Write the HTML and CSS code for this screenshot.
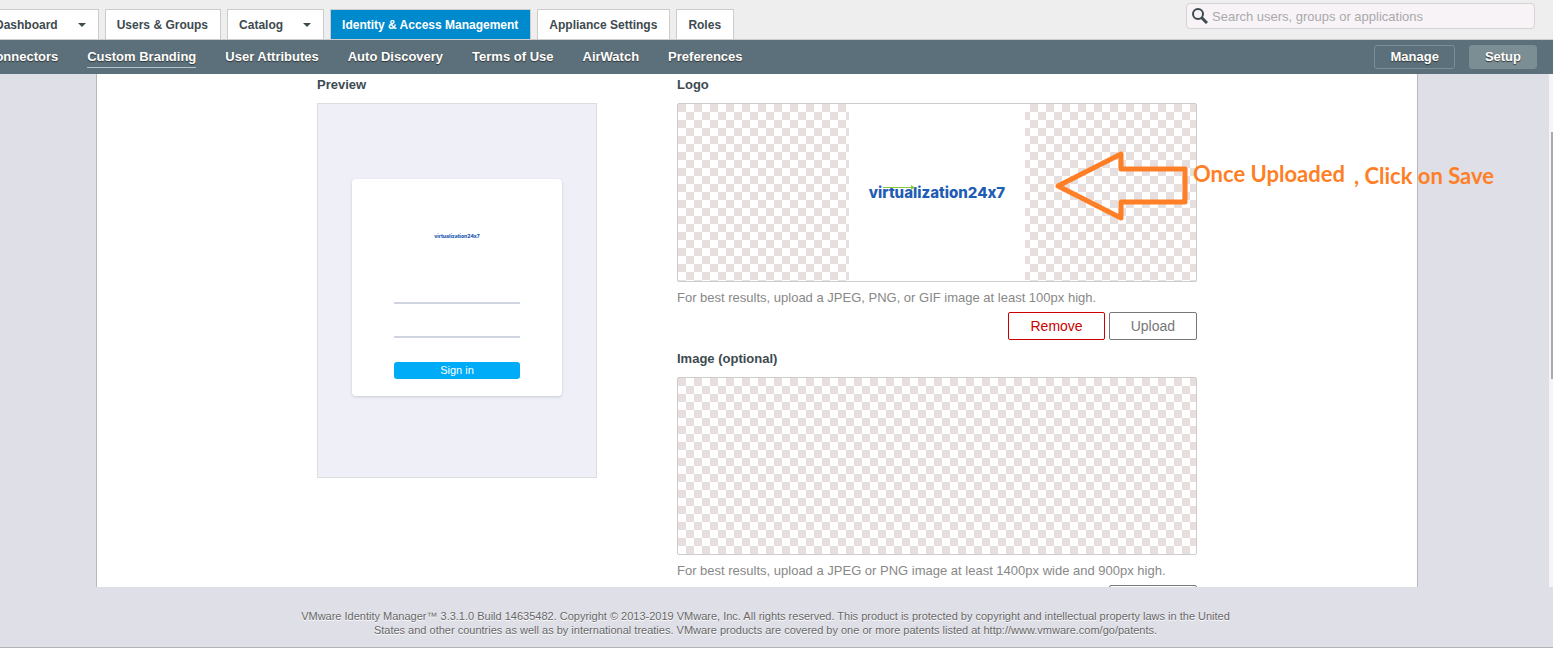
FILE: index.html
```html
<!DOCTYPE html>
<html lang="en">
<head>
    <meta charset="UTF-8">
    <meta name="viewport" content="width=device-width, initial-scale=1.0">
    <title>VMware Identity Manager - Custom Branding</title>
    <link rel="stylesheet" href="styles.css">
</head>
<body>
    <div class="app">
        <header class="topbar">
            <nav class="tabs" aria-label="Main">
                <a class="tab" href="#dashboard">Dashboard <span class="caret"></span></a>
                <a class="tab" href="#users">Users &amp; Groups</a>
                <a class="tab" href="#catalog">Catalog <span class="caret"></span></a>
                <a class="tab active" href="#iam">Identity &amp; Access Management</a>
                <a class="tab" href="#appliance">Appliance Settings</a>
                <a class="tab" href="#roles">Roles</a>
            </nav>
            <form class="search" role="search">
                <label for="search" aria-label="Search">
                    <svg width="16" height="16" viewBox="0 0 16 16" fill="none" stroke="#3e4a50">
                        <circle cx="6" cy="6" r="5" stroke-width="2"/>
                        <path d="M9.5 9.5 L15 15" stroke-width="3"/>
                    </svg>
                </label>
                <input type="text" id="search" placeholder="Search users, groups or applications">
            </form>
        </header>

        <nav class="subnav" aria-label="Identity and Access Management">
            <div class="subnav-links">
                <a href="#connectors">Connectors</a>
                <a class="current" href="#branding">Custom Branding</a>
                <a href="#attributes">User Attributes</a>
                <a href="#discovery">Auto Discovery</a>
                <a href="#terms">Terms of Use</a>
                <a href="#airwatch">AirWatch</a>
                <a href="#preferences">Preferences</a>
            </div>
            <div class="subnav-modes">
                <button type="button" class="mode">Manage</button>
                <button type="button" class="mode selected">Setup</button>
            </div>
        </nav>

        <div class="content">
            <main class="panel">
                <section class="preview-column">
                    <h2>Preview</h2>
                    <div class="preview">
                        <div class="login-card">
                            <div class="brand brand-small">virtualization24x7</div>
                            <div class="field"></div>
                            <div class="field"></div>
                            <div class="sign-in">Sign in</div>
                        </div>
                    </div>
                </section>

                <section class="upload-column">
                    <h2>Logo</h2>
                    <div class="dropzone">
                        <div class="logo-image">
                            <div class="brand">virtualization24x7
                                <svg class="brand-arrow" width="32" height="5" viewBox="0 0 32 5">
                                    <path d="M0 2h29v1H0z M28 0l4 2.5l-4 2.5z" fill="#8cc63f"/>
                                </svg>
                            </div>
                        </div>
                        <div class="callout">
                            <svg width="134" height="72" viewBox="0 0 134 72" fill="none" stroke="#ff7f27" stroke-width="5" stroke-linejoin="round">
                                <path d="M4 36 L67 4 V19 H131 V52 H67 V68 Z"/>
                            </svg>
                            <span>Once Uploaded</span>
                            <span class="callout-end">, Click on Save</span>
                        </div>
                    </div>
                    <p class="hint">For best results, upload a JPEG, PNG, or GIF image at least 100px high.</p>
                    <div class="buttons">
                        <button type="button" class="btn remove">Remove</button>
                        <button type="button" class="btn">Upload</button>
                    </div>

                    <h2>Image (optional)</h2>
                    <div class="dropzone empty"></div>
                    <p class="hint">For best results, upload a JPEG or PNG image at least 1400px wide and 900px high.</p>
                    <div class="buttons">
                        <button type="button" class="btn">Upload</button>
                    </div>
                </section>
            </main>
            <div class="scrollbar"><div class="thumb"></div></div>
        </div>

        <footer class="footer">
            <p>VMware Identity Manager™ 3.3.1.0 Build 14635482. Copyright © 2013-2019 VMware, Inc. All rights reserved. This product is protected by copyright and intellectual property laws in the United States and other countries as well as by international treaties. VMware products are covered by one or more patents listed at http://www.vmware.com/go/patents.</p>
        </footer>
    </div>
</body>
</html>
```

FILE: styles.css
```css
* {
    box-sizing: border-box;
}
body {
    margin: 0;
    padding: 0 4px 6px 0;
    height: 100vh;
    overflow: hidden;
    background: #fff;
    color: #3e4a50;
    font-family: "Liberation Sans", Arial, sans-serif;
    font-size: 13px;
}
a {
    color: inherit;
    text-decoration: none;
}
button {
    font-family: inherit;
    cursor: pointer;
}
.app {
    display: flex;
    flex-direction: column;
    height: 100%;
    overflow: hidden;
    background: #dfdfe8;
    border-bottom: 1px solid #b4b4b4;
}

/* Top bar */
.topbar {
    display: flex;
    justify-content: space-between;
    height: 40px;
    background: #eee;
    border-bottom: 1px solid #ccc;
}
.tabs {
    display: flex;
    gap: 6px;
    align-items: flex-end;
    margin-left: -17px;
}
.tab {
    display: flex;
    align-items: center;
    height: 30px;
    padding: 0 12px 0 11px;
    background: #fff;
    border: 1px solid #ccc;
    border-bottom: 0;
    font-size: 12px;
    font-weight: bold;
    white-space: nowrap;
}
.tab.active {
    background: #008ace;
    color: #fff;
}
.caret {
    margin-left: 20px;
    border: 4px solid transparent;
    border-top-color: #3e4a50;
    border-bottom: 0;
}
.search {
    display: flex;
    align-items: center;
    gap: 4px;
    width: 349px;
    height: 26px;
    margin: 3px 18px 0 0;
    padding: 0 5px;
    background: #f7f3f7;
    border: 1px solid #d4d4d4;
    border-radius: 4px;
}
.search label {
    display: flex;
}
.search input {
    flex: 1;
    padding: 0;
    border: 0;
    outline: 0;
    background: none;
    font: inherit;
}
.search input::placeholder {
    color: #aaa;
}

/* Sub navigation */
.subnav {
    display: flex;
    justify-content: space-between;
    align-items: center;
    height: 34px;
    padding-right: 16px;
    background: #5b707a;
    color: #fff;
    font-weight: bold;
    text-shadow: 0 1px 1px #333;
}
.subnav-links {
    display: flex;
    gap: 29px;
    margin-left: -14px;
    white-space: nowrap;
}
.subnav-links a {
    padding: 3px 0;
    border-bottom: 1px solid transparent;
}
.subnav-links a.current {
    border-bottom-color: #b5c2c9;
}
.subnav-modes {
    display: flex;
    gap: 14px;
}
.mode {
    height: 24px;
    padding: 0 15px 2px;
    background: none;
    border: 1px solid #7b8e94;
    border-radius: 3px;
    color: #fff;
    font-size: 13px;
    font-weight: bold;
    text-shadow: inherit;
}
.mode.selected {
    background: #7b8e94;
}

/* Content */
.content {
    display: flex;
    flex: 1;
    min-height: 0;
    overflow: hidden;
}
.panel {
    display: flex;
    gap: 80px;
    flex: 1;
    margin: 0 131px 0 96px;
    padding: 0 220px;
    background: #fff;
    border: 1px solid #b8b8b8;
    border-width: 0 1px;
}
.preview-column {
    width: 280px;
}
.upload-column {
    flex: 1;
}
h2 {
    margin: 0;
    padding: 3px 0 11px;
    font-size: 13px;
    line-height: 15px;
}
.preview {
    display: flex;
    justify-content: center;
    align-items: center;
    height: 375px;
    padding-bottom: 6px;
    background: #efeff7;
    border: 1px solid #ddd;
}
.login-card {
    width: 210px;
    height: 217px;
    padding: 42px;
    background: #fff;
    border-radius: 4px;
    box-shadow: 0 1px 3px #c8ccd4;
}
.brand {
    position: relative;
    color: #1f5cb3;
    font-family: Inter, sans-serif;
    font-size: 15px;
    font-weight: 800;
    font-variant-ligatures: none;
    line-height: 20px;
}
.brand-small {
    height: 49px;
    padding-top: 10px;
    font-size: 5px;
    line-height: 10px;
    text-align: center;
}
.brand-arrow {
    position: absolute;
    top: 2px;
    left: 14px;
}
.field {
    height: 34px;
    border-bottom: 2px solid #ced4e0;
}
.sign-in {
    height: 17px;
    margin-top: 24px;
    background: #00acf7;
    border-radius: 3px;
    color: #fff;
    font-size: 11px;
    line-height: 16px;
    text-align: center;
}
.dropzone {
    position: relative;
    display: flex;
    justify-content: center;
    height: 179px;
    border: 1px solid #ccc;
    border-radius: 2px;
    background: repeating-conic-gradient(#fff 0 25%, #e7dfde 0 50%) 0 0 / 16px 16px;
}
.dropzone.empty {
    height: 178px;
}
.logo-image {
    display: flex;
    justify-content: center;
    align-items: center;
    width: 176px;
    background: #fff;
}
.callout {
    position: absolute;
    top: 46px;
    left: 376px;
    display: flex;
    align-items: flex-start;
    color: #ff7f27;
    font-family: Lato, sans-serif;
    font-size: 22px;
    font-weight: bold;
    line-height: 48px;
    white-space: nowrap;
}
.callout span {
    margin-left: 5px;
}
.callout .callout-end {
    margin-left: 9px;
    line-height: 52px;
}
.hint {
    margin: 8px 0 6px;
    color: #888;
    line-height: 16px;
}
.buttons {
    display: flex;
    justify-content: flex-end;
    gap: 4px;
    margin-bottom: 8px;
}
.btn {
    height: 28px;
    padding: 0 21px;
    background: #fff;
    border: 1px solid #777;
    border-radius: 2px;
    color: #777;
    font-size: 14px;
}
.btn.remove {
    border-color: #c00;
    color: #c00;
}
.scrollbar {
    width: 4px;
    padding: 58px 0 0 2px;
    background: #f7f3f7;
}
.thumb {
    height: 247px;
    background: #aaa;
}

/* Footer */
.footer {
    height: 60px;
    padding: 22px 22px 0 0;
    color: #666;
    font-size: 11px;
    line-height: 14px;
    text-align: center;
    text-shadow: 0 1px 0 #fff;
}
.footer p {
    max-width: 936px;
    margin: 0 auto;
}
```
